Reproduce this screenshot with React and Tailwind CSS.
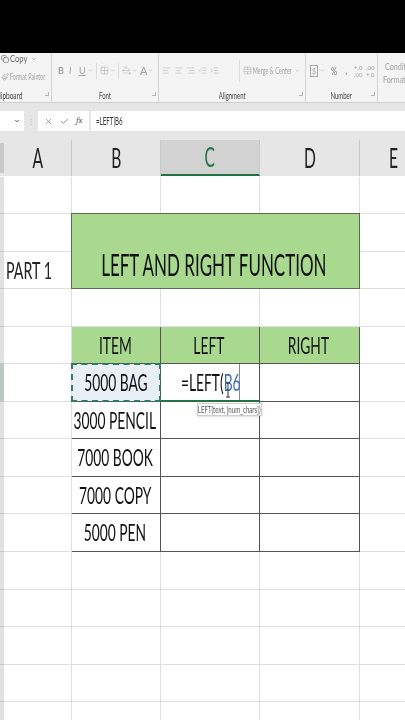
import { Check, X, Paintbrush, Copy, ChevronDown, Grid2x2, PaintBucket, AlignLeft, AlignCenter, AlignRight, IndentDecrease, IndentIncrease, TableCellsMerge } from 'lucide-react'

const sheet = { fontFamily: 'Lato, "Liberation Sans", sans-serif' }

const items = ['3000 PENCIL', '7000 BOOK', '7000 COPY', '5000 PEN']

// Calibri squeezed by the stretched video: keep layout, squeeze the glyphs
function Narrow({ className = 'scale-x-[0.6]', children }) {
    return <span className={`inline-block shrink-0 whitespace-nowrap ${className}`}>{children}</span>
}

function Corner() {
    return <span className="absolute bottom-[6px] right-[2px] w-[4px] h-[4px] border-r border-b border-[#b5b5b5]" />
}

function Group({ width, label, children }) {
    return (
        <div className={`relative shrink-0 h-full border-r border-[#d4d4d4] flex flex-col ${width}`}>
            <div className="h-[36px] flex items-center">{children}</div>
            <div className="flex justify-center text-[9px] text-[#444]"><Narrow className="scale-x-[0.66]">{label}</Narrow></div>
            <Corner />
        </div>
    )
}

function Ribbon() {
    return (
        <div className="h-[50px] bg-[#f4f4f4] border-b border-[#cfcfcf] flex overflow-hidden text-[#a3a3a3] blur-[0.3px]" style={sheet}>
            {/* Clipboard */}
            <div className="relative w-[52px] shrink-0 border-r border-[#d4d4d4] flex flex-col">
                <div className="h-[36px] flex flex-col text-[9px]">
                    <div className="h-[12px] flex items-center gap-[1px] pl-[1px] text-[#666]">
                        <Copy size={8} className="shrink-0" />
                        <Narrow className="scale-x-[0.85] origin-left">Copy</Narrow>
                        <ChevronDown size={6} className="-ml-[1px]" />
                    </div>
                    <div className="h-[24px] flex items-center gap-[1px] pl-[1px]">
                        <Paintbrush size={8} className="shrink-0" />
                        <Narrow className="scale-x-[0.6] origin-left">Format Painter</Narrow>
                    </div>
                </div>
                <div className="text-[9px] text-[#444] -ml-[5px]"><Narrow className="scale-x-[0.72] origin-left">Clipboard</Narrow></div>
                <Corner />
            </div>

            {/* Font */}
            <Group width="w-[107px]" label="Font">
                <div className="flex items-center pl-[6px] text-[9px]">
                    <span className="w-[11px] font-bold">B</span>
                    <span className="w-[10px] italic">I</span>
                    <span className="w-[9px] underline">U</span>
                    <ChevronDown size={5} />
                    <span className="w-[1px] h-[16px] bg-[#ddd] mx-[3px]" />
                    <Grid2x2 size={9} strokeWidth={1.2} />
                    <ChevronDown size={5} className="ml-[1px]" />
                    <span className="w-[1px] h-[16px] bg-[#ddd] mx-[3px]" />
                    <PaintBucket size={9} strokeWidth={1.2} />
                    <ChevronDown size={5} className="ml-[1px] mr-[3px]" />
                    <span className="text-[11px]">A</span>
                    <ChevronDown size={5} className="ml-[1px]" />
                </div>
            </Group>

            {/* Alignment */}
            <Group width="w-[147px]" label="Alignment">
                <div className="flex items-center pl-[3px] gap-[3px]">
                    <AlignLeft size={9} strokeWidth={1.2} />
                    <AlignCenter size={9} strokeWidth={1.2} />
                    <AlignRight size={9} strokeWidth={1.2} />
                    <IndentDecrease size={9} strokeWidth={1.2} />
                    <IndentIncrease size={9} strokeWidth={1.2} />
                    <span className="w-[1px] h-[22px] bg-[#ddd] ml-[17px]" />
                    <TableCellsMerge size={9} strokeWidth={1.2} />
                    <span className="w-[40px] -ml-[3px] text-[10px] flex justify-center"><Narrow className="scale-x-[0.55]">Merge &amp; Center</Narrow></span>
                    <ChevronDown size={5} />
                </div>
            </Group>

            {/* Number */}
            <Group width="w-[72px]" label="Number">
                <div className="flex items-center pl-[4px] text-[10px]">
                    <span className="w-[8px] h-[12px] border border-[#aaa] text-[7px] leading-[10px] text-center">$</span>
                    <ChevronDown size={5} className="ml-[2px]" />
                    <span className="ml-[6px] w-[10px] text-[11px] text-[#777]"><Narrow className="scale-x-[0.7] origin-left">%</Narrow></span>
                    <span className="ml-[1px] w-[9px] text-center font-bold">,</span>
                    <span className="ml-[3px] w-[12px] text-[6px] leading-[7px]">+.0<br />.00</span>
                    <span className="w-[12px] text-[6px] leading-[7px]">.00<br />+.0</span>
                </div>
            </Group>

            {/* Styles, cut by the page edge */}
            <div className="pl-[7px] pt-[7px] text-[9px] leading-[13px] whitespace-nowrap">
                <div><Narrow className="scale-x-[0.8] origin-left">Conditional</Narrow></div>
                <div className="-ml-[2px]"><Narrow className="scale-x-[0.8] origin-left">Formatting</Narrow></div>
            </div>
        </div>
    )
}

function FormulaBar() {
    return (
        <div className="h-[37px] bg-[#e6e6e6] pt-[8px] flex items-start" style={sheet}>
            <div className="w-[24px] h-[20px] bg-white flex items-center justify-end pr-[4px] text-[#555]">
                <ChevronDown size={6} strokeWidth={4} />
            </div>
            <div className="w-[14px] h-[20px] flex items-center justify-center text-[8px] text-[#bbb]">⋮</div>
            <div className="w-[51px] h-[20px] bg-white flex items-center justify-around px-[3px] text-[#666]">
                <X size={9} strokeWidth={1.5} />
                <Check size={9} strokeWidth={2} />
                <span className="text-[9px] italic font-serif">fx</span>
            </div>
            <div className="ml-[2px] flex-1 h-[20px] bg-white flex items-center pl-[5px] text-[11px] text-[#333]">
                <Narrow className="scale-x-[0.56] origin-left">=LEFT|B6</Narrow>
            </div>
        </div>
    )
}

function Head({ label, width, active }) {
    return (
        <div className={`h-[36px] shrink-0 flex items-center justify-center text-[26px] border-r border-[#c9c9c9] ${width} ${active ? 'bg-[#d2d2d2] text-[#217346] border-b-2 border-b-[#217346]' : 'text-[#222]'}`}>
            <Narrow>{label}</Narrow>
        </div>
    )
}

// one row of the sheet: gutter + A + B + C + D + E
function Row({ a, b, c, d, gutter = 'bg-[#e1e1e1]' }) {
    return (
        <div className="flex h-[37.55px]">
            <div className={`w-[4px] shrink-0 border-b border-[#c6c6c6] ${gutter}`} />
            <div className="w-[68px] shrink-0 border-r border-b border-[#dfdfdf] flex items-center">{a}</div>
            {b ?? <div className="w-[89px] shrink-0 border-r border-b border-[#dfdfdf]" />}
            {c ?? <div className="w-[99px] shrink-0 border-r border-b border-[#dfdfdf]" />}
            {d ?? <div className="w-[100px] shrink-0 border-r border-b border-[#dfdfdf]" />}
            <div className="flex-1 border-b border-[#dfdfdf]" />
        </div>
    )
}

function Cell({ width, green, children }) {
    return (
        <div className={`${width} shrink-0 border-r border-b border-[#555] flex items-center justify-center pr-[2px] text-[23px] text-[#111] ${green ? 'bg-[#a9d98f]' : 'bg-white'}`}>
            {children && <Narrow>{children}</Narrow>}
        </div>
    )
}

export default function App() {
    return (
        <div className="w-[405px] h-[720px] overflow-hidden bg-white">
            <div className="h-[53px] bg-black" />
            <Ribbon />
            <FormulaBar />

            {/* column headers */}
            <div className="flex bg-[#e6e6e6] h-[36px] overflow-hidden" style={sheet}>
                <div className="w-[4px] shrink-0 bg-[#c9c9c9] my-[3px]" />
                <Head label="A" width="w-[68px]" />
                <Head label="B" width="w-[89px]" />
                <Head label="C" width="w-[99px]" active />
                <Head label="D" width="w-[100px]" />
                <Head label="E" width="w-[68px]" />
            </div>

            <div className="pt-[0.5px]" style={sheet}>
                <Row />

                {/* rows 2 and 3 hold the merged title */}
                <div className="relative">
                    <Row />
                    <Row a={<span className="pl-[2px] text-[23px] text-[#222]"><Narrow className="scale-x-[0.62] origin-left">PART 1</Narrow></span>} />
                    <div className="absolute left-[71px] top-[-1px] bottom-0 w-[289px] bg-[#a9d98f] border border-[#5c6b52] flex items-end justify-center pr-[4px] pb-[2px] text-[31px] text-[#111] leading-[44px]">
                        <Narrow className="scale-x-[0.547]">LEFT AND RIGHT FUNCTION</Narrow>
                    </div>
                </div>

                <Row />

                <Row
                    b={<Cell width="w-[89px]" green>ITEM</Cell>}
                    c={<Cell width="w-[99px]" green>LEFT</Cell>}
                    d={<Cell width="w-[100px]" green>RIGHT</Cell>}
                />

                <div className="relative">
                    <Row
                        gutter="bg-[#b9c9bd]"
                        b={
                            <div className="w-[89px] shrink-0 relative bg-[#e8f0f6] border-r border-b border-[#555] flex items-center justify-center text-[23px] text-[#111]">
                                <Narrow>5000 BAG</Narrow>
                                <span className="absolute -inset-[1px] border-2 border-dashed border-[#2f7a6b]" />
                            </div>
                        }
                        c={
                            <div className="w-[99px] shrink-0 border-r border-b-2 border-[#555] border-b-[#217346] flex items-center text-[23px] text-[#111] pl-[20px]">
                                <span className="w-[59px] h-full border-r border-[#888] flex items-center">
                                    <Narrow className="scale-x-[0.6] origin-left">=LEFT(<span className="text-[#3a6fb5]">B6</span></Narrow>
                                </span>
                            </div>
                        }
                        d={<Cell width="w-[100px]" />}
                    />
                    {/* function hint */}
                    <div className="absolute left-[197px] top-[39px] h-[13px] w-[65px] bg-white border border-[#cfcfcf] shadow-sm flex items-center justify-center text-[9px] text-[#555]">
                        <Narrow className="scale-x-[0.68]">LEFT(text, [num_chars])</Narrow>
                    </div>
                    {/* I-beam mouse pointer */}
                    <svg className="absolute left-[225px] top-[18px]" width="6" height="16" viewBox="0 0 6 16" fill="none" stroke="#333" strokeWidth="1">
                        <path d="M1 1h4M3 1v14M1 15h4" />
                    </svg>
                </div>

                {items.map((item) => (
                    <Row key={item} b={<Cell width="w-[89px]">{item}</Cell>} c={<Cell width="w-[99px]" />} d={<Cell width="w-[100px]" />} />
                ))}

                <Row />
                <Row />
                <Row />
                <Row />
                <Row />
            </div>
        </div>
    )
}
